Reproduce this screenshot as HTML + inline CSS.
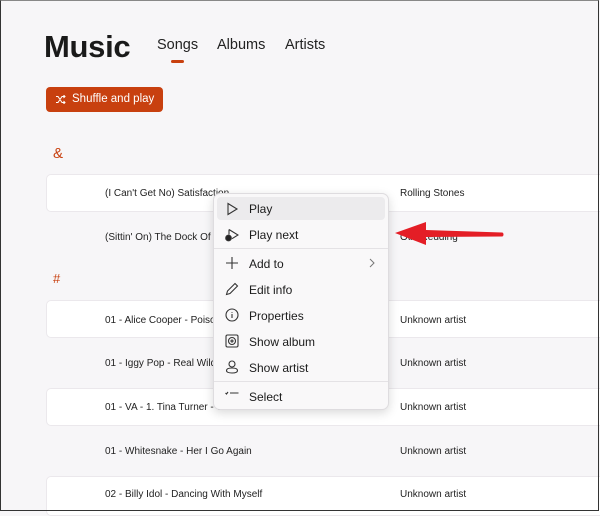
<!DOCTYPE html>
<html><head><style>
*{margin:0;padding:0;box-sizing:border-box}
body{width:600px;height:511px;overflow:hidden;background:#f7f6f8;font-family:"Liberation Sans",sans-serif;position:relative;color:#1b1b1b}
.frame{position:absolute;left:0;top:0;width:599px;height:511px;border:1px solid #333;border-top-color:#888;pointer-events:none;z-index:10}
.abs{position:absolute}
h1{position:absolute;left:44px;top:29px;font-size:31px;font-weight:600;letter-spacing:-0.3px;color:#1a1a1a}
.tab{position:absolute;top:37px;font-size:14.5px;color:#222}
.btn{position:absolute;left:46px;top:87px;width:117px;height:25px;background:#c8400f;border-radius:4px;color:#fff;font-size:11.5px;line-height:25px;padding-left:26px}
.sec{position:absolute;left:53px;color:#c8400f;font-size:15px}
.card{position:absolute;left:46px;width:560px;height:38px;background:#fff;border:1px solid #ebe8ec;border-radius:5px}
.t{position:absolute;font-size:10px;color:#222}
.menu{position:absolute;left:213px;top:193px;width:176px;height:217px;background:#f9f8f9;border:1px solid #dedcdf;border-radius:7px;box-shadow:0 3px 10px rgba(0,0,0,.15)}
.mi{position:absolute;left:35px;font-size:12px;color:#1b1b1b}
.sep{position:absolute;left:0;width:174px;height:1px;background:#e4e2e5}
svg.i{position:absolute;left:11px}
</style></head><body>
<div class="frame"></div>
<h1>Music</h1>
<div class="tab" style="left:157px">Songs</div>
<div class="abs" style="left:171px;top:60px;width:13px;height:3px;border-radius:2px;background:#c8400f"></div>
<div class="tab" style="left:217px">Albums</div>
<div class="tab" style="left:285px">Artists</div>
<div class="btn"><svg class="abs" style="left:10px;top:8px" width="10" height="9" viewBox="0 0 10 9" fill="none" stroke="#fff" stroke-width="1"><path d="M0 1.5h2l4 6h3M0 7.5h2l4-6h3M7.5 0l1.5 1.5L7.5 3M7.5 6l1.5 1.5L7.5 9"/></svg>Shuffle and play</div>
<div class="sec" style="top:145px">&amp;</div>
<div class="card" style="top:174px"></div>
<div class="t" style="left:105px;top:188px">(I Can't Get No) Satisfaction</div>
<div class="t" style="left:400px;top:188px">Rolling Stones</div>
<div class="t" style="left:105px;top:232px">(Sittin' On) The Dock Of T</div>
<div class="t" style="left:400px;top:232px">Otis Redding</div>
<div class="sec" style="top:271px;font-size:13px">#</div>
<div class="card" style="top:300px"></div>
<div class="t" style="left:105px;top:315px">01 - Alice Cooper - Poison</div>
<div class="t" style="left:400px;top:315px">Unknown artist</div>
<div class="t" style="left:105px;top:358px">01 - Iggy Pop - Real Wild</div>
<div class="t" style="left:400px;top:358px">Unknown artist</div>
<div class="card" style="top:388px"></div>
<div class="t" style="left:105px;top:402px">01 - VA - 1. Tina Turner - We Don't Need Another Hero</div>
<div class="t" style="left:400px;top:402px">Unknown artist</div>
<div class="t" style="left:105px;top:446px">01 - Whitesnake - Her I Go Again</div>
<div class="t" style="left:400px;top:446px">Unknown artist</div>
<div class="card" style="top:476px;height:40px"></div>
<div class="t" style="left:105px;top:489px">02 - Billy Idol - Dancing With Myself</div>
<div class="t" style="left:400px;top:489px">Unknown artist</div>

<div class="menu">
<div class="abs" style="left:3px;top:3px;width:168px;height:23px;background:#ecebed;border-radius:4px"></div>
<svg class="i" style="top:8px" width="14" height="14" viewBox="0 0 14 14" fill="none" stroke="#333" stroke-width="1.1"><path d="M3 1.5v11l9-5.5z"/></svg>
<div class="mi" style="top:8px">Play</div>
<svg class="i" style="top:34px" width="14" height="14" viewBox="0 0 14 14" fill="none" stroke="#333" stroke-width="1.1"><path d="M4 1.5v5M4 1.5l9 5.5-6 3.7"/><circle cx="3.5" cy="10" r="2.8" fill="#222"/></svg>
<div class="mi" style="top:34px">Play next</div>
<div class="sep" style="top:54px"></div>
<svg class="i" style="top:62px" width="14" height="14" viewBox="0 0 14 14" stroke="#333" stroke-width="1.1"><path d="M7 1v12M1 7h12"/></svg>
<div class="mi" style="top:63px">Add to</div>
<svg class="abs" style="left:155px;top:64px" width="6" height="10" viewBox="0 0 6 10" fill="none" stroke="#777"><path d="M1 1l4 4-4 4"/></svg>
<svg class="i" style="top:88px" width="14" height="14" viewBox="0 0 14 14" fill="none" stroke="#333" stroke-width="1.1"><path d="M1.5 12.5l1-3.5 7.5-7.5 2.5 2.5-7.5 7.5z"/></svg>
<div class="mi" style="top:89px">Edit info</div>
<svg class="i" style="top:114px" width="14" height="14" viewBox="0 0 14 14" fill="none" stroke="#333" stroke-width="1.1"><circle cx="7" cy="7" r="6"/><path d="M7 6v4M7 4v.8"/></svg>
<div class="mi" style="top:115px">Properties</div>
<svg class="i" style="top:140px" width="14" height="14" viewBox="0 0 14 14" fill="none" stroke="#333" stroke-width="1.1"><rect x="1" y="1" width="12" height="12" rx="1.5"/><circle cx="7" cy="7" r="3.5"/><circle cx="7" cy="7" r="1"/></svg>
<div class="mi" style="top:141px">Show album</div>
<svg class="i" style="top:166px" width="14" height="14" viewBox="0 0 14 14" fill="none" stroke="#333" stroke-width="1.1"><circle cx="7" cy="4" r="3"/><path d="M1.5 10.5c0-1.5 2-2.5 5.5-2.5s5.5 1 5.5 2.5c0 1.5-2 2.5-5.5 2.5s-5.5-1-5.5-2.5z"/></svg>
<div class="mi" style="top:167px">Show artist</div>
<div class="sep" style="top:187px"></div>
<svg class="i" style="top:196px" width="14" height="8" viewBox="0 0 14 8" fill="none" stroke="#333" stroke-width="1.1"><path d="M0.5 3l1 1 1.5-2M5 3h8.5"/></svg>
<div class="mi" style="top:196px">Select</div>
</div>

<svg class="abs" style="left:392px;top:218px" width="116" height="30" viewBox="0 0 116 30"><path d="M3 15L34 4v8l76 2.5c2 0 2 4 0 4L34 19v8z" fill="#e41e26"/></svg>
</body></html>
